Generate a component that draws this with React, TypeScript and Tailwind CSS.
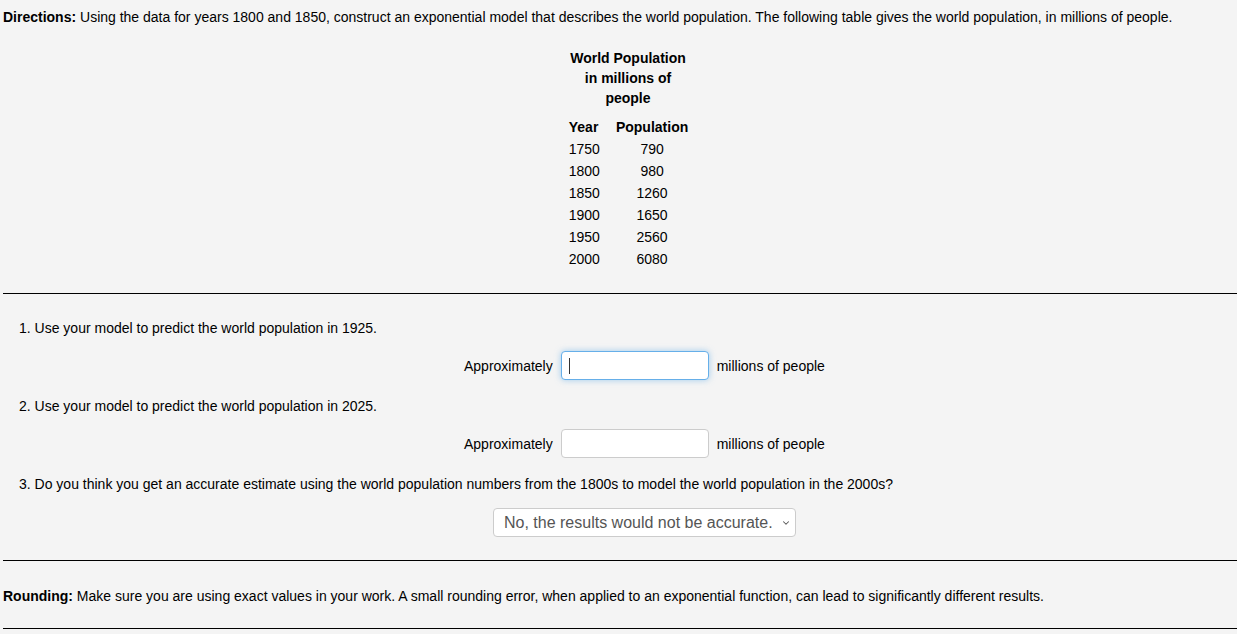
import { ChevronDown } from "lucide-react";

const ROWS: [string, string][] = [
  ["1750", "790"],
  ["1800", "980"],
  ["1850", "1260"],
  ["1900", "1650"],
  ["1950", "2560"],
  ["2000", "6080"],
];

function AnswerRow({ focused }: { focused?: boolean }) {
  return (
    <div className="flex items-center pl-[461px] h-[29px]">
      <span>Approximately</span>
      <div
        className={
          "ml-[8px] w-[148px] h-[29px] bg-white rounded-[4px] border flex items-center px-[7px] " +
          (focused
            ? "border-[#66afe9] shadow-[0_0_6px_rgba(102,175,233,0.6)]"
            : "border-[#cccccc]")
        }
      >
        {focused && <span className="w-px h-[16px] bg-[#333]" />}
      </div>
      <span className="ml-[8px]">millions of people</span>
    </div>
  );
}

export default function App() {
  return (
    <div className="min-h-[634px] bg-[#f4f4f4] text-black text-[14px] leading-4 font-['Liberation_Sans',Arial,sans-serif] pl-[3px] pt-[9px]">
      <p>
        <b>Directions:</b> Using the data for years 1800 and 1850, construct an exponential model that
        describes the world population. The following table gives the world population, in millions
        of people.
      </p>

      <div className="flex justify-center mt-[23px]">
        <table className="ml-[16px]">
          <caption className="font-bold leading-5 pb-[8px] w-[124px] mx-auto">
            World Population in millions of people
          </caption>
          <thead>
            <tr className="h-[22px]">
              <th className="text-left px-[3px] font-bold">Year</th>
              <th className="text-center pl-[13px] pr-[2px] font-bold">Population</th>
            </tr>
          </thead>
          <tbody>
            {ROWS.map(([y, p]) => (
              <tr key={y} className="h-[22px]">
                <td className="text-left px-[3px]">{y}</td>
                <td className="text-center pl-[13px] pr-[2px]">{p}</td>
              </tr>
            ))}
          </tbody>
        </table>
      </div>

      <hr className="border-0 border-t border-black mt-[23px]" />

      <div className="pl-[16px] pt-[26px]">1. Use your model to predict the world population in 1925.</div>
      <div className="mt-[15px]">
        <AnswerRow focused />
      </div>
      <div className="pl-[16px] mt-[18px]">2. Use your model to predict the world population in 2025.</div>
      <div className="mt-[15px]">
        <AnswerRow />
      </div>
      <div className="pl-[16px] mt-[18px]">
        3. Do you think you get an accurate estimate using the world population numbers from the 1800s
        to model the world population in the 2000s?
      </div>
      <div className="pl-[490px] mt-[16px]">
        <div className="relative w-[303px] h-[29px] bg-white border border-[#cccccc] rounded-[4px] flex items-center pl-[10px] text-[16px] text-[#555555]">
          <span>No, the results would not be accurate.</span>
          <ChevronDown className="absolute right-[4px] top-[9px] w-[10px] h-[10px] text-[#555]" strokeWidth={2.5} />
        </div>
      </div>

      <hr className="border-0 border-t border-black mt-[23px]" />

      <p className="mt-[27px]">
        <b>Rounding:</b> Make sure you are using exact values in your work. A small rounding error, when
        applied to an exponential function, can lead to significantly different results.
      </p>

      <hr className="border-0 border-t border-black mt-[24px]" />
    </div>
  );
}
